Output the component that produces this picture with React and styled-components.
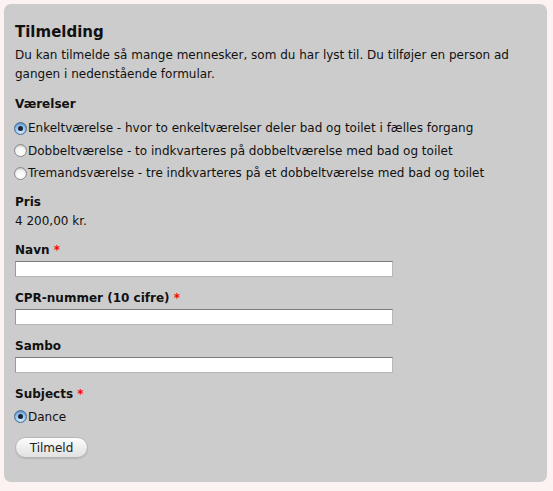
import { createGlobalStyle } from 'styled-components'
import styled from 'styled-components'

const GlobalStyle = createGlobalStyle`
html, body {
  margin: 0;
  padding: 0;
  background: #fdf2f2;
}
body {
  font-family: 'DejaVu Sans', Verdana, sans-serif;
  font-size: 12px;
  color: #111;
}
`

const Panel = styled.form`
margin: 4px 6px 0 4px;
background: #cccccc;
border-radius: 7px;
padding: 18px 11px 24px 11px;
`

const Title = styled.h2`
font-size: 15px;
line-height: 20px;
font-weight: bold;
margin: 0 0 4px 0;
`

const Intro = styled.p`
margin: 0;
line-height: 19px;
`

const Field = styled.div`
margin-top: ${(p) => p.$gap || 11}px;
`

const Label = styled.div`
font-weight: bold;
line-height: 19px;
margin-bottom: ${(p) => p.$below || 0}px;
`

const Price = styled.div`
line-height: 19px;
`

const Star = styled.span`
color: #ff0000;
`

const Option = styled.label`
display: flex;
align-items: center;
height: 22.5px;
margin-left: -1px;
`

const Radio = styled.input`
appearance: none;
width: 13px;
height: 13px;
margin: 0 1px 0 0;
border-radius: 50%;
border: 1px solid #8a8a8a;
background: radial-gradient(circle at 50% 70%, #ffffff 0%, #f2f2f2 60%, #d6d6d6 100%);
box-shadow: inset 0 1px 1px rgba(0,0,0,0.15);
position: relative;
flex: none;

&:checked {
  border-color: #4a6a94;
  background: radial-gradient(circle at 50% 75%, #d4ecff 0%, #8dc0ee 55%, #5b8fc8 100%);
}
&:checked::after {
  content: '';
  position: absolute;
  left: 50%;
  top: 50%;
  width: 5px;
  height: 5px;
  margin: -2.5px 0 0 -2.5px;
  border-radius: 50%;
  background: #1a2436;
}
`

const TextInput = styled.input`
display: block;
box-sizing: border-box;
width: 378px;
height: 16px;
margin: 1px 0 0 0;
padding: 0 3px;
background: #fff;
border: 1px solid #b8b8b8;
border-top-color: #7a7a7a;
border-left-color: #9a9a9a;
outline: none;
`

const Button = styled.button`
margin-top: 9px;
width: 73px;
height: 21px;
border-radius: 11px;
border: 1px solid #b5b5b5;
background: linear-gradient(#fdfdfd, #ececec 55%, #e2e2e2);
box-shadow: 0 1px 1px rgba(0,0,0,0.12);
font-family: 'DejaVu Sans', Verdana, sans-serif;
font-size: 12px;
color: #222;
padding: 0;
`

const rooms = [
  'Enkeltværelse - hvor to enkeltværelser deler bad og toilet i fælles forgang',
  'Dobbeltværelse - to indkvarteres på dobbeltværelse med bad og toilet',
  'Tremandsværelse - tre indkvarteres på et dobbeltværelse med bad og toilet',
]

const App = () => {
  return (
    <>
      <GlobalStyle />
      <Panel onSubmit={(e) => e.preventDefault()}>
        <Title>Tilmelding</Title>
        <Intro>
          Du kan tilmelde så mange mennesker, som du har lyst til. Du tilføjer en person ad gangen i nedenstående formular.
        </Intro>

        <Field $gap={11}>
          <Label $below={3}>Værelser</Label>
          {rooms.map((r, i) => (
            <Option key={r}>
              <Radio type="radio" name="room" defaultChecked={i === 0} />
              {r}
            </Option>
          ))}
        </Field>

        <Field $gap={8}>
          <Label>Pris</Label>
          <Price>4 200,00 kr.</Price>
        </Field>

        <Field $gap={10}>
          <Label>Navn <Star>*</Star></Label>
          <TextInput type="text" />
        </Field>

        <Field $gap={12}>
          <Label>CPR-nummer (10 cifre) <Star>*</Star></Label>
          <TextInput type="text" />
        </Field>

        <Field $gap={12}>
          <Label>Sambo</Label>
          <TextInput type="text" />
        </Field>

        <Field $gap={12}>
          <Label $below={2}>Subjects <Star>*</Star></Label>
          <Option>
            <Radio type="radio" name="subject" defaultChecked />
            Dance
          </Option>
        </Field>

        <Button type="submit">Tilmeld</Button>
      </Panel>
    </>
  )
}

export default App
